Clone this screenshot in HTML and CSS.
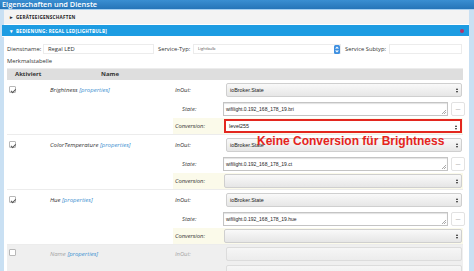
FILE: index.html
```html
<!DOCTYPE html>
<html lang="de">

<head>
    <meta charset="UTF-8">
    <meta name="viewport" content="width=device-width, initial-scale=1.0">
    <title>Eigenschaften und Dienste</title>
    <link rel="stylesheet" href="styles.css">
</head>

<body>
    <div class="top">Eigenschaften und Dienste</div>
    <div class="frame">
        <div class="acc"><span class="arr">&#9656;</span>Geräteeigenschaften</div>
        <div class="acc open"><span class="arr">&#9662;</span>Bedienung: Regal LED[Lightbulb]<span class="dot"></span></div>

        <div class="content">
            <!-- Dienst -->
            <div class="service">
                <label>Dienstname:</label>
                <div class="inp">Regal LED</div>
                <label class="pl">Service-Typ:</label>
                <div class="inp typ">Lightbulb
                    <svg class="selicon" width="6" height="9" viewBox="0 0 6 9">
                        <rect width="6" height="9" rx="1.5" fill="#3d8fe0"/>
                        <path d="M3 1.5 L5 3.6 L1 3.6 Z M3 7.5 L5 5.4 L1 5.4 Z" fill="#fff"/>
                    </svg>
                </div>
                <label class="pl">Service Subtyp:</label>
                <div class="inp"></div>
            </div>

            <div class="caption">Merkmalstabelle</div>

            <div class="tbl">
                <div class="thead">
                    <span class="h1">Aktiviert</span>
                    <span class="h2">Name</span>
                    <span></span>
                </div>

                <!-- Brightness -->
                <div class="row">
                    <div class="c-check"><span class="cb on"></span></div>
                    <div class="c-name"><i>Brightness</i> <a>[properties]</a></div>
                    <div class="c-props">
                        <div class="prop"><span class="lbl">InOut:</span><div class="sel">ioBroker.State</div></div>
                        <div class="prop st"><span class="lbl">State:</span><div class="txt">wifilight.0.192_168_178_19.bri</div><span class="btn">&mdash;</span></div>
                        <div class="prop conv"><span class="lbl">Conversion:</span><div class="sel mark">level255</div></div>
                    </div>
                </div>

                <!-- ColorTemperature -->
                <div class="row">
                    <div class="c-check"><span class="cb on"></span></div>
                    <div class="c-name"><i>ColorTemperature</i> <a>[properties]</a></div>
                    <div class="c-props">
                        <div class="prop"><span class="lbl">InOut:</span><div class="sel">ioBroker.State</div></div>
                        <div class="prop st"><span class="lbl">State:</span><div class="txt">wifilight.0.192_168_178_19.ct</div><span class="btn">&mdash;</span></div>
                        <div class="prop conv"><span class="lbl">Conversion:</span><div class="sel"></div></div>
                    </div>
                </div>

                <!-- Hue -->
                <div class="row">
                    <div class="c-check"><span class="cb on"></span></div>
                    <div class="c-name"><i>Hue</i> <a>[properties]</a></div>
                    <div class="c-props">
                        <div class="prop"><span class="lbl">InOut:</span><div class="sel">ioBroker.State</div></div>
                        <div class="prop st"><span class="lbl">State:</span><div class="txt">wifilight.0.192_168_178_19.hue</div><span class="btn">&mdash;</span></div>
                        <div class="prop conv"><span class="lbl">Conversion:</span><div class="sel"></div></div>
                    </div>
                </div>

                <!-- Name (nicht aktiv) -->
                <div class="row off">
                    <div class="c-check"><span class="cb"></span></div>
                    <div class="c-name"><i>Name</i> <a>[properties]</a></div>
                    <div class="c-props">
                        <div class="prop"><span class="lbl">InOut:</span><div class="sel"></div></div>
                        <div class="prop"><span class="lbl"></span><div class="sel"></div></div>
                    </div>
                </div>
            </div>
        </div>
    </div>

    <div class="note">Keine Conversion für Brightness</div>
</body>

</html>
```

FILE: styles.css
```css
* {
    margin: 0;
    padding: 0;
    box-sizing: border-box;
}

body {
    width: 474px;
    height: 271px;
    overflow: hidden;
    background: #fff;
    font-family: "Open Sans", "Liberation Sans", sans-serif;
    font-size: 6px;
    color: #333;
}

/* Kopfzeile */
.top {
    height: 10px;
    padding-left: 2px;
    background: linear-gradient(#3a8fd2, #2675b8);
    border-bottom: 1px solid #a9d1f0;
    color: #fff;
    font-size: 7.4px;
    font-weight: 600;
    line-height: 9px;
}

.frame {
    border-left: 4px solid #c9e0f3;
    border-right: 5px solid #c9e0f3;
    padding-bottom: 20px;
}

.acc {
    position: relative;
    height: 15px;
    padding-left: 6px;
    background: #f3f3f3;
    border-bottom: 1px solid #fff;
    color: #222;
    font-size: 4.6px;
    font-weight: 700;
    letter-spacing: 0.25px;
    text-transform: uppercase;
    line-height: 14px;
}

.acc .arr {
    display: inline-block;
    width: 6px;
    font-size: 5px;
}

.acc.open {
    height: 12px;
    margin-left: -2px;
    padding-left: 8px;
    background: #1d9ce2;
    color: #fff;
    line-height: 12px;
}

.dot {
    position: absolute;
    right: 5px;
    top: 4px;
    width: 4px;
    height: 4px;
    border-radius: 50%;
    background: #b3336c;
}

.content {
    padding: 6px 5px 0 3px;
}

/* Dienst */
.service {
    display: grid;
    grid-template-columns: 36px 111px 39px 148px 48px 73px;
    align-items: center;
    height: 12px;
}

.service label {
    font-size: 5.8px;
    color: #333;
}

.service .pl {
    padding-left: 4px;
}

.inp {
    position: relative;
    height: 10px;
    padding-left: 4px;
    border: 1px solid #ececec;
    background: #fff;
    font-size: 5.8px;
    line-height: 8px;
}

.inp.typ {
    font-size: 4px;
    color: #555;
    padding-right: 8px;
}

.selicon {
    position: absolute;
    right: 0;
    top: 0;
}

.caption {
    height: 13px;
    padding-top: 2px;
    font-size: 5.8px;
}

/* Tabelle */
.tbl {
    width: 456px;
}

.thead,
.row {
    display: grid;
    grid-template-columns: 38px 128px 290px;
}

.thead {
    height: 12px;
    background: #dedede;
    border-top: 1px solid #ececec;
    font-size: 6px;
    font-weight: 700;
    line-height: 11px;
}

.h1 {
    padding-left: 8px;
}

.h2 {
    text-align: center;
    padding-left: 2px;
}

.row {
    border-bottom: 1px solid #ececec;
    background: #fff;
}

.c-check {
    padding: 6px 0 0 2px;
}

.cb {
    display: block;
    position: relative;
    width: 7px;
    height: 7px;
    border: 1px solid #b8b8b8;
    border-radius: 1px;
    background: #fff;
}

.cb.on::after {
    content: "";
    position: absolute;
    left: 1.5px;
    top: 0.5px;
    width: 2px;
    height: 3.5px;
    border-right: 1px solid #555;
    border-bottom: 1px solid #555;
    transform: rotate(45deg);
}

.c-name {
    padding: 6px 0 0 5px;
    font-size: 6px;
    line-height: 8px;
}

.c-name i {
    color: #333;
}

.c-name a {
    color: #3c8fd0;
    font-style: italic;
}

.prop {
    display: grid;
    grid-template-columns: 53px 1fr;
    align-items: center;
    height: 17.5px;
    padding-right: 1px;
}

.prop:first-child {
    height: 20px;
}

.prop .lbl {
    padding-left: 2px;
    font-size: 5.8px;
    font-style: italic;
    color: #333;
}

.prop.st {
    grid-template-columns: 47px 225px 14px;
    column-gap: 3px;
}

.prop.st .lbl {
    padding-left: 9px;
}

.prop.conv {
    grid-template-columns: 51px 1fr;
    background: #fbfaea;
    height: 16.5px;
}

.sel {
    position: relative;
    height: 14px;
    padding-left: 3px;
    border: 1px solid #cfcfcf;
    border-radius: 2px;
    background: linear-gradient(#f9f9f9, #e6e6e6);
    font-family: "Liberation Sans", Arial, sans-serif;
    font-size: 5.4px;
    line-height: 12px;
    color: #222;
}

.sel::before,
.sel::after {
    content: "";
    position: absolute;
    right: 3px;
    border-left: 1.5px solid transparent;
    border-right: 1.5px solid transparent;
}

.sel::before {
    top: 4px;
    border-bottom: 2px solid #222;
}

.sel::after {
    top: 7px;
    border-top: 2px solid #222;
}

.sel.mark {
    border: 2px solid #e3271f;
    border-radius: 0;
    background: #fff;
    padding-left: 3px;
    line-height: 10px;
}

.txt {
    position: relative;
    height: 14px;
    padding-left: 2px;
    border: 1px solid #c4c4c4;
    background: #fff;
    box-shadow: inset 0 1px 1px #e2e2e2;
    font-family: "Liberation Sans", Arial, sans-serif;
    font-size: 5px;
    line-height: 12px;
    color: #222;
}

/* Griff zum Vergrößern */
.txt::after {
    content: "";
    position: absolute;
    right: 1px;
    bottom: 1px;
    width: 4px;
    height: 4px;
    background: linear-gradient(135deg, transparent 45%, #aaa 45%, #aaa 55%, transparent 55%, transparent 75%, #aaa 75%, #aaa 85%, transparent 85%);
}

.btn {
    height: 14px;
    border: 1px solid #e2e2e2;
    border-radius: 2px;
    background: #fff;
    text-align: center;
    font-size: 5px;
    line-height: 12px;
    color: #999;
}

/* nicht aktive Zeile */
.row.off {
    background: #efefef;
}

.row.off .prop:first-child {
    height: 18px;
}

.row.off .c-check {
    padding-top: 4px;
}

.row.off .c-name {
    padding-top: 5px;
}

.row.off .c-name i,
.row.off .lbl {
    color: #a5a5a5;
}

.row.off .sel {
    background: linear-gradient(#f6f6f6, #ececec);
    border-color: #dcdcdc;
}

.row.off .sel::before,
.row.off .sel::after {
    display: none;
}

/* Hinweis */
.note {
    position: absolute;
    left: 257px;
    top: 135px;
    font-family: "Liberation Sans", Arial, sans-serif;
    font-size: 12px;
    font-weight: 700;
    line-height: 12px;
    color: #e5241c;
    white-space: nowrap;
}
```
